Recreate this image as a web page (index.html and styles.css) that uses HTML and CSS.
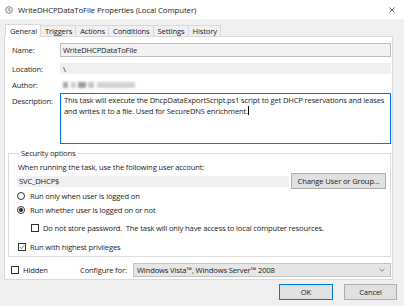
FILE: index.html
```html
<!DOCTYPE html>
<html>
<head>
<meta charset="utf-8">
<link rel="stylesheet" href="styles.css">
</head>
<body>
<div class="titlebar">
  <svg class="appicon" viewBox="0 0 8 8"><circle cx="4" cy="4" r="3.4" fill="#e8e8e8" stroke="#8a8a8a" stroke-width="0.9"/><path d="M4 2v2.2l1.4.9" fill="none" stroke="#6a6a6a" stroke-width="0.8"/></svg>
  <span class="title">WriteDHCPDataToFile Properties (Local Computer)</span>
  <svg class="close" viewBox="0 0 7 7"><path d="M0.5 0.5L6.5 6.5M6.5 0.5L0.5 6.5" stroke="#333" stroke-width="0.8"/></svg>
</div>
<div class="tabs">
  <div class="tab active">General</div>
  <div class="tab">Triggers</div>
  <div class="tab">Actions</div>
  <div class="tab">Conditions</div>
  <div class="tab">Settings</div>
  <div class="tab">History</div>
</div>
<div class="panel">
  <div class="form">
    <div class="row r-name"><span class="lbl">Name:</span><div class="field name">WriteDHCPDataToFile</div></div>
    <div class="row r-loc"><span class="lbl">Location:</span><div class="field ro">\</div></div>
    <div class="row r-author"><span class="lbl">Author:</span><div class="field plain"><span class="blur b1"></span><span class="blur b2"></span><span class="blur b3"></span><span class="blur b4"></span><span class="blur b5"></span></div></div>
    <div class="row r-desc"><span class="lbl">Description:</span><div class="desc">This task will execute the DhcpDataExportScript.ps1 script to get DHCP reservations and leases and writes it to a file. Used for SecureDNS enrichment.<span class="caret"></span></div></div>
  </div>
  <fieldset class="group">
    <legend>Security options</legend>
    <div class="line">When running the task, use the following user account:</div>
    <div class="acct"><div class="acctfield">SVC_DHCP$</div><div class="btn change">Change User or Group...</div></div>
    <div class="opt o1"><span class="radio"></span>Run only when user is logged on</div>
    <div class="opt o2"><span class="radio on"></span>Run whether user is logged on or not</div>
    <div class="opt o3"><span class="check"></span>Do not store password.&nbsp; The task will only have access to local computer resources.</div>
    <div class="opt o4"><span class="check"><svg viewBox="0 0 8 8"><path d="M1.3 4.2L3.1 6L6.8 1.9" fill="none" stroke="#222" stroke-width="0.9"/></svg></span>Run with highest privileges</div>
  </fieldset>
  <div class="bottomrow">
    <span class="check"></span><span class="hidden">Hidden</span>
    <span class="cfg">Configure for:</span>
    <div class="select"><span>Windows Vista™, Windows Server™ 2008</span><svg class="chev" viewBox="0 0 6 4"><path d="M0.5 0.8L3 3.2L5.5 0.8" fill="none" stroke="#555" stroke-width="0.7"/></svg></div>
  </div>
</div>
<div class="footer">
  <div class="btn ok">OK</div>
  <div class="btn cancel">Cancel</div>
</div>
</body>
</html>
```

FILE: styles.css
```css
* { box-sizing: border-box; }
html, body { margin: 0; padding: 0; }
body {
  width: 404px;
  height: 306px;
  overflow: hidden;
  background: #f0f0f0;
  font-family: "Open Sans", "Noto Sans", sans-serif;
  font-size: 7.6px;
  letter-spacing: -0.15px;
  color: #1b1b1b;
}
.titlebar {
  height: 19px;
  background: #fff;
  display: flex;
  align-items: center;
  padding: 0 9px 0 5px;
}
.appicon { width: 8px; height: 8px; margin-right: 5px; }
.title { font-size: 7.8px; color: #222; letter-spacing: -0.1px; }
.close { margin-left: auto; width: 6px; height: 6px; }

.tabs {
  display: flex;
  align-items: flex-end;
  height: 12px;
  margin-top: 5px;
  padding-left: 5px;
}
.tab {
  height: 11px;
  line-height: 10px;
  padding: 0 3px 0 4px;
  border: 1px solid #d9d9d9;
  border-bottom: none;
  border-left: none;
  background: #f0f0f0;
}
.tab.active {
  height: 13px;
  margin-bottom: -1px;
  background: #fff;
  border-left: 1px solid #d9d9d9;
  position: relative;
  z-index: 1;
  line-height: 12px;
  padding: 0 3px 0 4px;
}

.panel {
  margin-left: 4px;
  width: 389px;
  height: 244px;
  background: #fff;
  border: 1px solid #d9d9d9;
}
.form { padding: 0 1px 0 7px; }
.row { display: flex; align-items: center; }
.lbl { width: 48px; flex: none; }
.field { flex: 1; height: 100%; padding-left: 3px; display: flex; align-items: center; }
.r-name { margin-top: 6px; height: 14px; }
.field.name { background: #f2f2f2; border: 1px solid #bdbdbd; padding-left: 2px; }
.r-loc { margin-top: 6px; height: 11px; }
.field.ro { background: #f0f0f0; }
.r-author { margin-top: 5px; height: 11px; }
.blur { display: inline-block; height: 6px; filter: blur(1px); }
.b1 { width: 5px; background: #a8a8a8; }
.b2 { width: 5px; margin-left: 3px; background: #cfcfcf; }
.b3 { width: 8px; margin-left: 2px; background: #9c9c9c; }
.b4 { width: 6px; margin-left: 2px; background: #c4c4c4; }
.b5 { width: 38px; margin-left: 3px; background: #d4d4d4; }
.r-desc { margin-top: 3px; height: 51px; align-items: flex-start; }
.r-desc .lbl { padding-top: 3px; }
.desc {
  flex: 1;
  height: 51px;
  border: 1px solid #0078d7;
  padding: 2px 3px 0 3px;
  line-height: 9.5px;
}
.caret { display: inline-block; width: 1px; height: 9px; background: #000; vertical-align: -1px; }

.group {
  margin: 4px 1px 0 3px;
  padding: 4px 4px 2px 9px;
  border: 1px solid #dcdcdc;
  min-width: 0;
}
.group legend { padding: 0 2px; margin-left: 1px; line-height: 10px; }
.line { height: 10px; line-height: 10px; }
.acct { display: flex; align-items: center; height: 16px; margin-top: 1px; }
.acctfield {
  flex: 1;
  height: 11px;
  line-height: 11px;
  background: #f0f0f0;
  margin-left: -1px;
  padding-left: 2px;
}
.btn {
  display: flex;
  align-items: center;
  justify-content: center;
  background: #e1e1e1;
  border: 1px solid #adadad;
}
.change { width: 95px; height: 16px; margin-left: 2px; }
.opt { display: flex; align-items: center; height: 14px; }
.o1 { margin-left: -1px; }
.o2 { margin-left: -1px; }
.o3 { margin-left: 13px; margin-top: 4px; }
.o4 { margin-left: 0; margin-top: 5px; }
.radio {
  width: 8px; height: 8px; border-radius: 50%;
  border: 1px solid #333;
  margin-right: 5px;
  display: flex; align-items: center; justify-content: center;
}
.radio.on::after { content: ""; width: 4px; height: 4px; border-radius: 50%; background: #222; }
.check {
  width: 8px; height: 8px;
  border: 1px solid #333;
  margin-right: 4px;
  display: inline-flex;
  flex: none;
}
.check svg { width: 6px; height: 6px; }

.bottomrow {
  display: flex;
  align-items: center;
  height: 14px;
  margin-top: 6px;
  padding: 0 1px 0 6px;
}
.hidden { width: 57px; }
.cfg { width: 53px; }
.select {
  flex: 1;
  height: 14px;
  background: #e6e6e6;
  border: 1px solid #c3c3c3;
  display: flex;
  align-items: center;
  padding: 0 5px 0 3px;
}
.chev { margin-left: auto; width: 6px; height: 4px; }

.footer {
  display: flex;
  justify-content: flex-end;
  gap: 11px;
  padding-right: 7px;
  margin-top: 4px;
}
.ok, .cancel { width: 54px; height: 16px; }
.ok { border-color: #0078d7; }
.cancel { width: 53px; }
```
